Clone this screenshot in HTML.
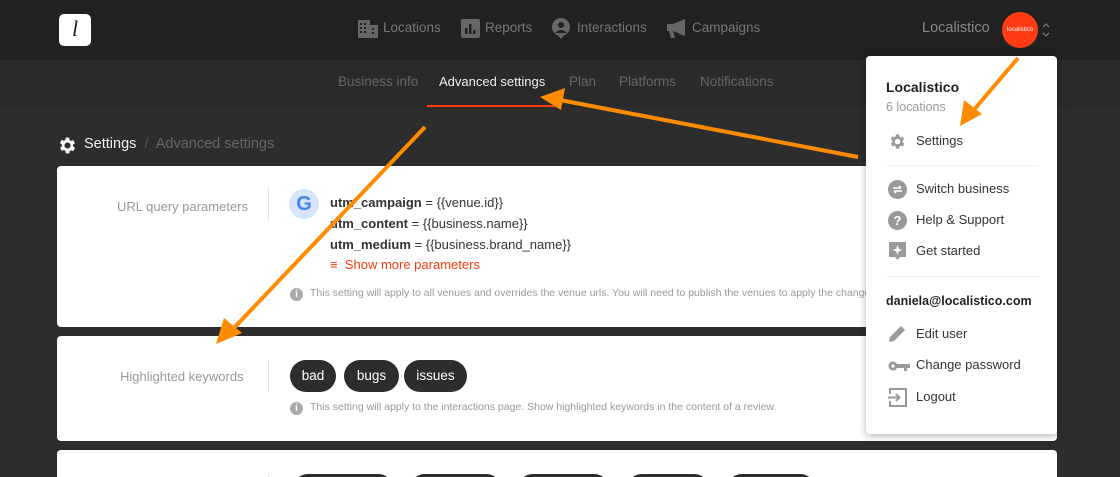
<!DOCTYPE html>
<html style="width:1120px;height:477px;overflow:hidden"><head><meta charset="utf-8"><style>
*{margin:0;padding:0;box-sizing:border-box}
body{width:1120px;height:477px;overflow:hidden;background:#2d2d2d;font-family:"Source Sans Pro","Liberation Sans",sans-serif;position:relative}
.top{position:absolute;left:0;top:0;width:1120px;height:60px;background:#212121}
.sub{position:absolute;left:0;top:60px;width:1120px;height:47px;background:#2a2a2a}
.t{position:absolute;white-space:nowrap}
.card{position:absolute;left:57px;width:1000px;background:#fff;border-radius:4px;overflow:hidden}
.lbl{color:#999;font-size:13px}
.vl{position:absolute;width:1px;background:#e3e3e3}
.pill{position:absolute;height:32px;border-radius:16px;background:#2d2d2d;color:#fff;font-size:13.5px;line-height:32px;text-align:center}
.info{position:absolute;width:13px;height:13px;border-radius:50%;background:#aaa;color:#fff;font-size:10px;line-height:13px;text-align:center;font-weight:bold}
.dd{position:absolute;left:866px;top:56px;width:191px;height:378px;background:#fff;border-radius:4px;box-shadow:0 2px 8px rgba(0,0,0,.3)}
.mi{position:absolute;left:20px;font-size:13px;color:#333}
.ic{position:absolute;left:22px;width:19px;height:19px}
.hr{position:absolute;left:20px;width:152px;height:1px;background:#eee}
.nav{color:#777;font-size:13.5px}
</style></head><body>
<div class="top"></div><div class="sub"></div>
<div style="position:absolute;left:59px;top:14px;width:32px;height:32px;background:#fff;border-radius:5px;color:#222;font:italic 22px 'Liberation Serif',serif;text-align:center;line-height:30px">l</div>
<svg class="t" style="left:358px;top:19px" width="20" height="20"><rect x="0" y="1" width="12" height="18" fill="#666"/><rect x="12" y="6" width="8" height="13" fill="#666"/><g fill="#212121"><rect x="2" y="4" width="2" height="2"/><rect x="6" y="4" width="2" height="2"/><rect x="2" y="8" width="2" height="2"/><rect x="6" y="8" width="2" height="2"/><rect x="2" y="12" width="2" height="2"/><rect x="6" y="12" width="2" height="2"/><rect x="14" y="9" width="2" height="2"/><rect x="14" y="13" width="2" height="2"/></g></svg>
<div class="t nav" style="left:383px;top:20px">Locations</div>
<svg class="t" style="left:461px;top:19px" width="19" height="19"><rect width="19" height="19" rx="2" fill="#666"/><rect x="4" y="9" width="2.5" height="6" fill="#222"/><rect x="8" y="5" width="2.5" height="10" fill="#222"/><rect x="12" y="11" width="2.5" height="4" fill="#222"/></svg>
<div class="t nav" style="left:485px;top:20px">Reports</div>
<svg class="t" style="left:552px;top:18px" width="18" height="22"><circle cx="9" cy="9" r="9" fill="#666"/><circle cx="9" cy="7" r="3" fill="#212121"/><path d="M3 15 Q9 9 15 15" fill="#212121"/><path d="M6 17 L9 21 L12 17Z" fill="#666"/></svg>
<div class="t nav" style="left:577px;top:20px">Interactions</div>
<svg class="t" style="left:667px;top:19px" width="20" height="20"><path d="M0 5 H6 L18 0 V17 L6 12 L8 19 H4 L2 12 H0Z" fill="#666"/></svg>
<div class="t nav" style="left:692px;top:20px">Campaigns</div>
<div class="t" style="left:922px;top:20px;color:#888;font-size:14.5px">Localistico</div>
<div style="position:absolute;left:1002px;top:12px;width:36px;height:36px;border-radius:50%;background:#ff3b14;color:#fff;font-size:6px;text-align:center;line-height:36px">localistico</div>
<svg class="t" style="left:1042px;top:22px" width="8" height="16"><path d="M1 5l3-3 3 3M1 11l3 3 3-3" stroke="#777" stroke-width="1.3" fill="none"/></svg>
<div class="t nav" style="left:338px;top:74px;color:#666">Business info</div>
<div class="t" style="left:439px;top:74px;color:#eee;font-size:13px">Advanced settings</div>
<div style="position:absolute;left:427px;top:105px;width:130px;height:2px;background:#ff3b14"></div>
<div class="t nav" style="left:569px;top:74px;color:#666">Plan</div>
<div class="t nav" style="left:619px;top:74px;color:#666">Platforms</div>
<div class="t nav" style="left:700px;top:74px;color:#666">Notifications</div>
<svg class="t" style="left:57px;top:135px" width="21" height="21" viewBox="0 0 24 24"><path fill="#fff" d="M19.4 13a7.5 7.5 0 000-2l2.1-1.6-2-3.5-2.5 1a7 7 0 00-1.7-1L15 3h-4l-.4 2.6a7 7 0 00-1.7 1l-2.5-1-2 3.5L6.6 11a7.5 7.5 0 000 2l-2.1 1.6 2 3.5 2.5-1a7 7 0 001.7 1L11 21h4l.4-2.6a7 7 0 001.7-1l2.5 1 2-3.5zM13 15.5A3.5 3.5 0 1113 8.5a3.5 3.5 0 010 7z" transform="translate(-1 0)"/></svg>
<div class="t" style="left:84px;top:136px;color:#eee;font-size:14.5px">Settings <span style="color:#555">&nbsp;/&nbsp;</span> <span style="color:#666">Advanced settings</span></div>
<div class="card" style="top:166px;height:161px">
<div class="t lbl" style="left:60px;top:33px">URL query parameters</div>
<div class="vl" style="left:211px;top:22px;height:33px"></div>
<div style="position:absolute;left:232px;top:23px;width:30px;height:30px;border-radius:50%;background:#d6e4fc;color:#4285f4;font-weight:bold;font-size:20px;text-align:center;line-height:30px">G</div>
<div class="t" style="left:273px;top:26px;font-size:13px;color:#333;line-height:21px"><b>utm_campaign</b> = {{venue.id}}<br><b>utm_content</b> = {{business.name}}<br><b>utm_medium</b> = {{business.brand_name}}</div>
<div class="t" style="left:273px;top:91px;font-size:13px;color:#ff3b14">≡ &nbsp;Show more parameters</div>
<div class="info" style="left:233px;top:122px">i</div>
<div class="t" style="left:253px;top:121px;font-size:10.5px;color:#999">This setting will apply to all venues and overrides the venue urls. You will need to publish the venues to apply the changes.</div>
</div>
<div class="card" style="top:336px;height:105px">
<div class="t lbl" style="left:63px;top:33px">Highlighted keywords</div>
<div class="vl" style="left:211px;top:24px;height:32px"></div>
<div class="pill" style="left:233px;top:24px;width:46px">bad</div>
<div class="pill" style="left:287px;top:24px;width:55px">bugs</div>
<div class="pill" style="left:347px;top:24px;width:63px">issues</div>
<div class="info" style="left:233px;top:66px">i</div>
<div class="t" style="left:253px;top:65px;font-size:10.5px;color:#999">This setting will apply to the interactions page. Show highlighted keywords in the content of a review.</div>
</div>
<div class="card" style="top:450px;height:27px;border-radius:4px 4px 0 0">
<div class="vl" style="left:211px;top:24px;height:10px"></div>
<div class="pill" style="left:235px;top:24px;width:102px"></div>
<div class="pill" style="left:352px;top:24px;width:93px"></div>
<div class="pill" style="left:460px;top:24px;width:93px"></div>
<div class="pill" style="left:569px;top:24px;width:84px"></div>
<div class="pill" style="left:669px;top:24px;width:90px"></div>
</div>
<div class="dd">
<div class="t" style="left:20px;top:23px;font-size:14px;font-weight:bold;color:#222">Localistico</div>
<div class="t" style="left:20px;top:44px;font-size:12.5px;color:#999">6 locations</div>
<svg class="ic" style="top:76px" viewBox="0 0 24 24"><path fill="#999" d="M19.4 13a7.5 7.5 0 000-2l2.1-1.6-2-3.5-2.5 1a7 7 0 00-1.7-1L15 3h-4l-.4 2.6a7 7 0 00-1.7 1l-2.5-1-2 3.5L6.6 11a7.5 7.5 0 000 2l-2.1 1.6 2 3.5 2.5-1a7 7 0 001.7 1L11 21h4l.4-2.6a7 7 0 001.7-1l2.5 1 2-3.5zM13 15.5A3.5 3.5 0 1113 8.5a3.5 3.5 0 010 7z" transform="translate(-1 0)"/></svg>
<div class="mi" style="left:50px;top:77px">Settings</div>
<div class="hr" style="top:109px"></div>
<svg class="ic" style="top:124px"><circle cx="9.5" cy="9.5" r="9.5" fill="#999"/><path d="M5 8h8M11 6l2 2M14 11H6M8 13l-2-2" stroke="#fff" stroke-width="1.6" fill="none"/></svg>
<div class="mi" style="left:50px;top:125px">Switch business</div>
<svg class="ic" style="top:155px"><circle cx="9.5" cy="9.5" r="9.5" fill="#999"/><text x="9.5" y="14" font-size="13" font-weight="bold" fill="#fff" text-anchor="middle" font-family="Liberation Sans">?</text></svg>
<div class="mi" style="left:50px;top:156px">Help &amp; Support</div>
<svg class="ic" style="top:186px"><path d="M1 0h17v15h-6l-2.5 3-2.5-3H1z" fill="#999"/><path d="M9.5 3l1.3 3.7 3.7 1.3-3.7 1.3-1.3 3.7-1.3-3.7-3.7-1.3 3.7-1.3z" fill="#fff"/></svg>
<div class="mi" style="left:50px;top:187px">Get started</div>
<div class="hr" style="top:220px"></div>
<div class="t" style="left:20px;top:238px;font-size:12.5px;font-weight:bold;color:#222">daniela@localistico.com</div>
<svg class="ic" style="top:268px"><path d="M1 18l1-5L13 2l4 4L6 17z" fill="#999"/></svg>
<div class="mi" style="left:50px;top:270px">Edit user</div>
<svg class="ic" style="top:300px;width:22px"><circle cx="5" cy="10" r="4.5" fill="#999"/><circle cx="5" cy="10" r="1.6" fill="#fff"/><rect x="9" y="8" width="13" height="4" fill="#999"/><rect x="16" y="11" width="3" height="4" fill="#999"/></svg>
<div class="mi" style="left:50px;top:301px">Change password</div>
<svg class="ic" style="top:332px"><path d="M2 6V1h16v17H2v-5" stroke="#999" stroke-width="2" fill="none"/><path d="M0 9.5h11M8 6l3.5 3.5L8 13" stroke="#999" stroke-width="2" fill="none"/></svg>
<div class="mi" style="left:50px;top:333px">Logout</div>
</div>
<svg style="position:absolute;left:0;top:0" width="1120" height="477">
<g stroke="#ff8c00" stroke-width="4" fill="#ff8c00">
<line x1="1018" y1="58" x2="972" y2="112"/><path d="M960 126 L964 100 L982 114Z" stroke="none"/>
<line x1="858" y1="157" x2="560" y2="100"/><path d="M540 97 L565 88 L561 110Z" stroke="none"/>
<line x1="425" y1="127" x2="232" y2="330"/><path d="M216 344 L224 318 L242 333Z" stroke="none"/>
</g></svg>
</body></html>
